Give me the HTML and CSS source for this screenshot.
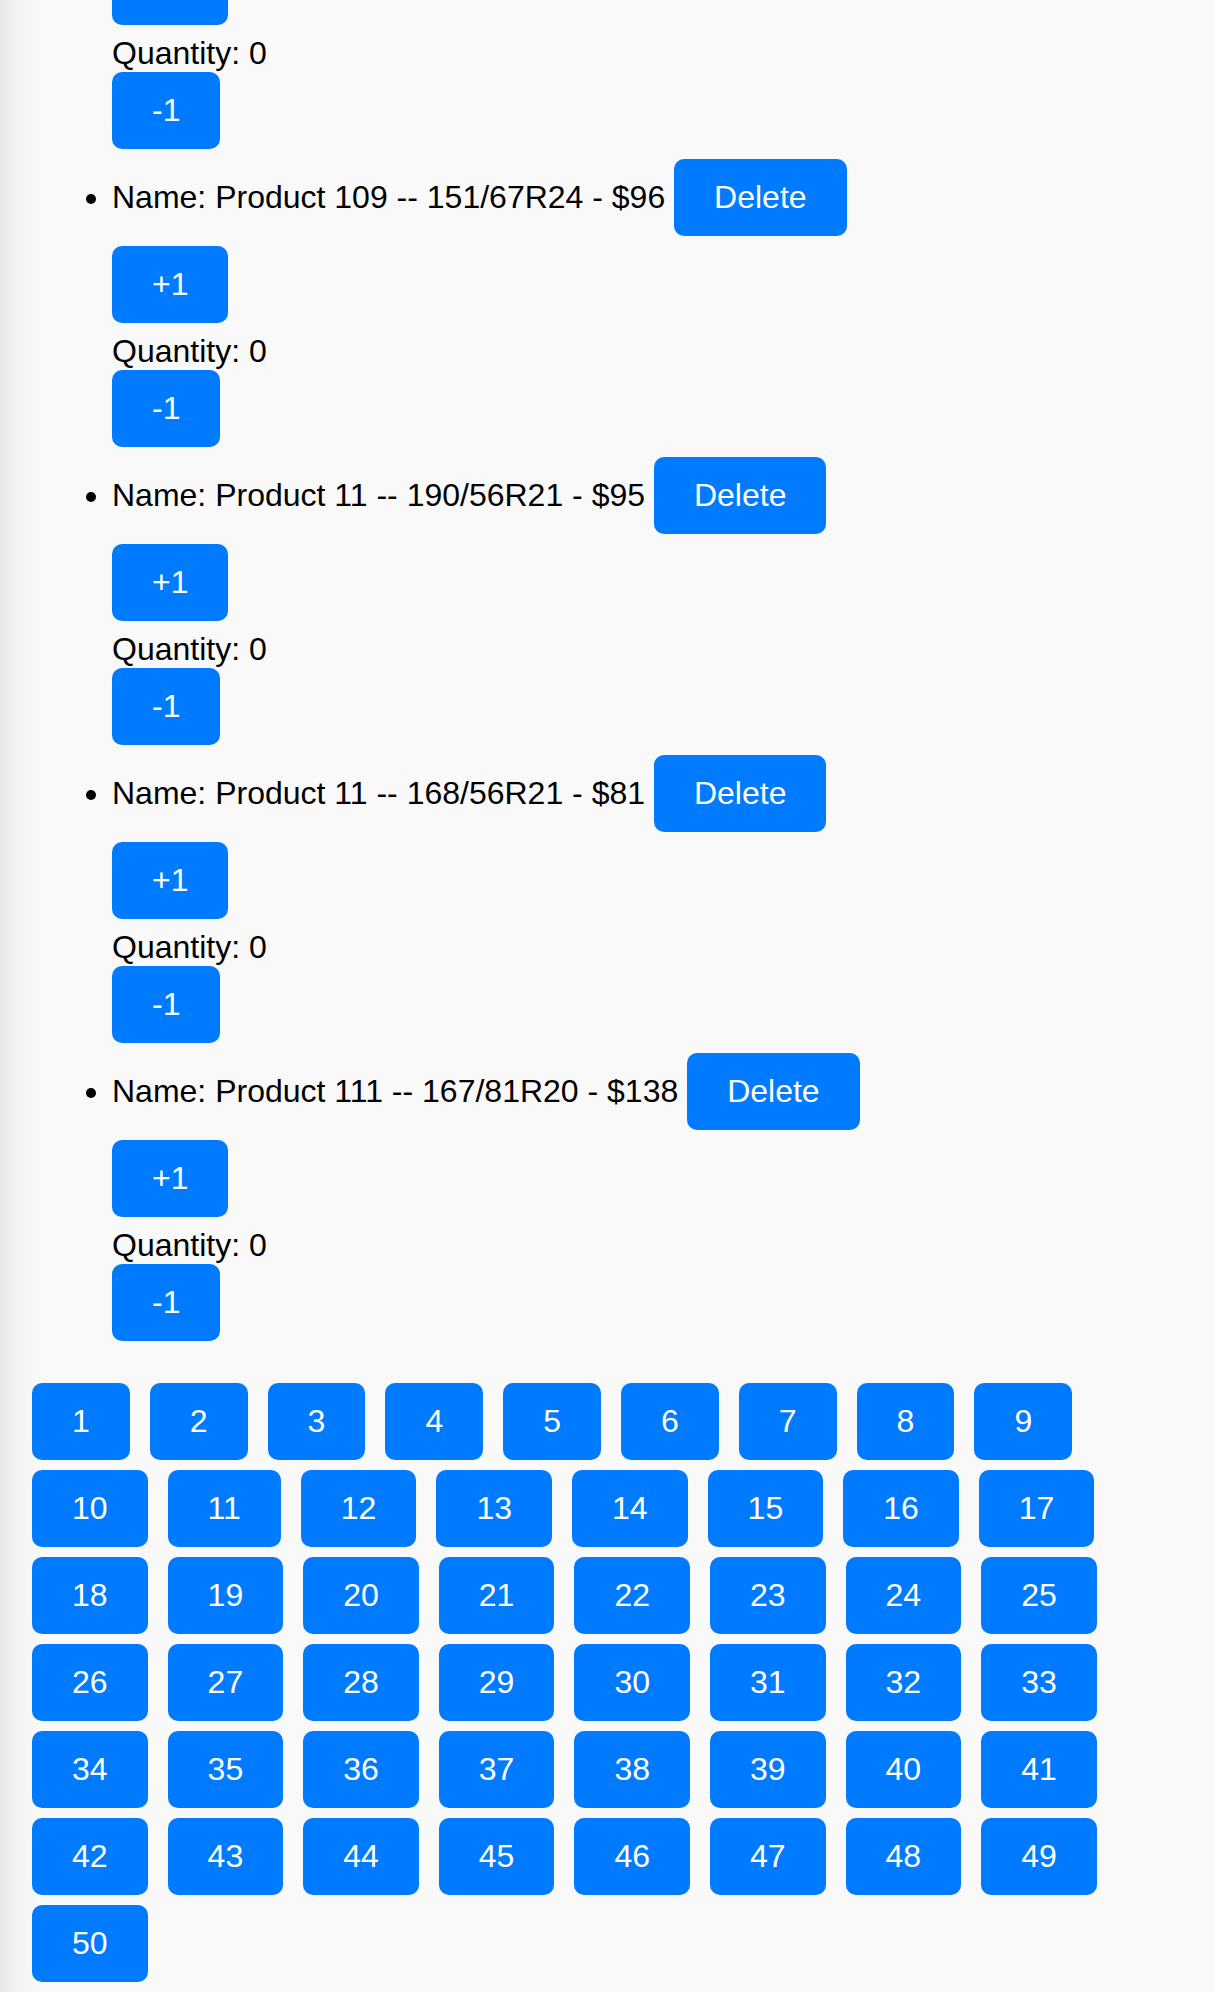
FILE: index.html
```html
<!DOCTYPE html>
<html lang="en">
<head>
    <meta charset="UTF-8">
    <meta name="viewport" content="width=device-width, initial-scale=1.0">
    <title>Products</title>
    <link rel="stylesheet" href="styles.css">
</head>
<body>
    <div id="app">
        <ul id="product-list">
            <li class="partial">
                <div class="controls">
                    <button class="plus">+1</button>
                    <span class="quantity">Quantity: 0</span>
                    <button class="minus">-1</button>
                </div>
            </li>
            <li>
                Name: Product 109 -- 151/67R24 - $96 <button class="delete">Delete</button>
                <div class="controls">
                    <button class="plus">+1</button>
                    <span class="quantity">Quantity: 0</span>
                    <button class="minus">-1</button>
                </div>
            </li>
            <li>
                Name: Product 11 -- 190/56R21 - $95 <button class="delete">Delete</button>
                <div class="controls">
                    <button class="plus">+1</button>
                    <span class="quantity">Quantity: 0</span>
                    <button class="minus">-1</button>
                </div>
            </li>
            <li>
                Name: Product 11 -- 168/56R21 - $81 <button class="delete">Delete</button>
                <div class="controls">
                    <button class="plus">+1</button>
                    <span class="quantity">Quantity: 0</span>
                    <button class="minus">-1</button>
                </div>
            </li>
            <li>
                Name: Product 111 -- 167/81R20 - $138 <button class="delete">Delete</button>
                <div class="controls">
                    <button class="plus">+1</button>
                    <span class="quantity">Quantity: 0</span>
                    <button class="minus">-1</button>
                </div>
            </li>
        </ul>

        <div id="pagination">
            <button>1</button>
            <button>2</button>
            <button>3</button>
            <button>4</button>
            <button>5</button>
            <button>6</button>
            <button>7</button>
            <button>8</button>
            <button>9</button>
            <button>10</button>
            <button>11</button>
            <button>12</button>
            <button>13</button>
            <button>14</button>
            <button>15</button>
            <button>16</button>
            <button>17</button>
            <button>18</button>
            <button>19</button>
            <button>20</button>
            <button>21</button>
            <button>22</button>
            <button>23</button>
            <button>24</button>
            <button>25</button>
            <button>26</button>
            <button>27</button>
            <button>28</button>
            <button>29</button>
            <button>30</button>
            <button>31</button>
            <button>32</button>
            <button>33</button>
            <button>34</button>
            <button>35</button>
            <button>36</button>
            <button>37</button>
            <button>38</button>
            <button>39</button>
            <button>40</button>
            <button>41</button>
            <button>42</button>
            <button>43</button>
            <button>44</button>
            <button>45</button>
            <button>46</button>
            <button>47</button>
            <button>48</button>
            <button>49</button>
            <button>50</button>
        </div>
    </div>
</body>
</html>
```
FILE: styles.css
```css
html {
    background-color: #f9f9f9;
}

body {
    font-family: "Liberation Sans", Arial, sans-serif;
    font-size: 32px;
    margin: 0;
    min-height: 1992px;
    color: #000;
    background: linear-gradient(to right, #e6e6e6 0, #f3f3f3 18px, #f9f9f9 40px);
}

#app {
    padding: 0 32px 10px;
}

/* list is scrolled: first item only shows its lower half */
#product-list {
    margin: -62px 0 32px;
    padding-left: 80px;
}

#product-list li {
    padding-bottom: 10px;
}

#product-list li.partial {
    list-style: none;
}

.controls {
    display: flex;
    flex-direction: column;
    align-items: flex-start;
}

.plus {
    margin-top: 10px;
}

.quantity {
    margin-top: 10px;
}

button {
    font: inherit;
    line-height: normal;
    background-color: #007bff;
    color: white;
    border: none;
    border-radius: 10px;
    padding: 20px 40px;
    cursor: pointer;
}

button:hover {
    background-color: #0069d9;
}

#pagination {
    display: flex;
    flex-wrap: wrap;
    gap: 10px 20px;
}
```
